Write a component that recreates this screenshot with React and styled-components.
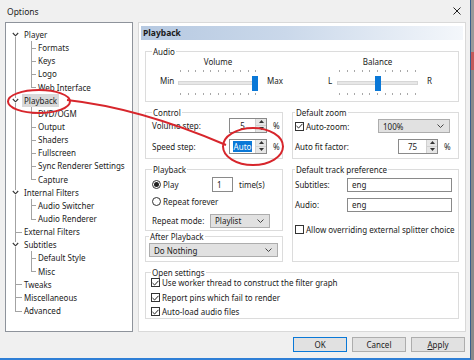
import React from "react";
import styled, { createGlobalStyle } from "styled-components";

const GlobalStyle = createGlobalStyle`
  html, body { margin: 0; padding: 0; background: #7b7b7b; }
  #root { width: 474px; height: 360px; }
  * { box-sizing: border-box; }
`;

const Screen = styled.div`
  position: relative;
  width: 474px;
  height: 360px;
  display: flex;
  overflow: hidden;
  font-family: "Noto Sans", "DejaVu Sans", sans-serif;
  font-size: 8px;
  color: #1b1b1b;
`;

const Dialog = styled.div`
  width: 471px;
  height: 360px;
  background: #f0f0f0;
  border-right: 1px solid #3a5f8c;
  border-bottom: 2px solid #2f7fd6;
  display: flex;
  flex-direction: column;
`;

const Edge = styled.div`
  flex: 1;
  background: linear-gradient(180deg, #9a9a9a 0 52px, #c45a5a 52px 70px, #8a8a8a 70px);
`;

const TitleBar = styled.div`
  height: 22px;
  display: flex;
  align-items: center;
  justify-content: space-between;
  padding: 0 9px 0 7px;
  font-size: 8.5px;
`;

const Body = styled.div`
  height: 310px;
  display: flex;
  gap: 5px;
  padding: 0 4px 0 5px;
`;

const Tree = styled.div`
  width: 128px;
  height: 100%;
  background: #fff;
  border: 1px solid #8e939b;
  padding-top: 5px;
`;

const TreeRow = styled.div`
  height: 13.15px;
  display: flex;
  align-items: stretch;
`;

const Guide = styled.span`
  position: relative;
  flex: none;
  width: ${(p) => p.$w}px;
  display: flex;
  align-items: center;
  padding-left: 6px;

  &::before {
    content: "";
    display: ${(p) => (p.$pos === "none" ? "none" : "block")};
    position: absolute;
    left: 9px;
    width: 1px;
    background: #a3a3a3;
    top: ${(p) => (p.$pos === "first" ? "50%" : "0")};
    bottom: ${(p) => (p.$pos === "last" ? "50%" : "0")};
  }

  &::after {
    content: "";
    display: ${(p) => (p.$stub ? "block" : "none")};
    position: absolute;
    left: 9px;
    top: 50%;
    width: ${(p) => p.$w - 9}px;
    height: 1px;
    background: #a3a3a3;
  }
`;

const Chevron = styled.svg`
  position: relative;
  z-index: 1;
  background: #fff;
`;

const NodeLabel = styled.span`
  display: flex;
  align-items: center;
  padding: 0 2px;
  white-space: nowrap;
  background: ${(p) => (p.$selected ? "#d9d9d9" : "transparent")};
`;

const Panel = styled.div`
  flex: 1;
  height: 100%;
  background: #fff;
  border: 1px solid #d9d9d9;
  padding: 3px 2px 0;
`;

const PanelHeader = styled.div`
  height: 14px;
  line-height: 14px;
  padding-left: 2px;
  font-weight: bold;
  font-size: 8.5px;
  background: linear-gradient(90deg, #b6c9e1 0%, #cad8ea 45%, #f4f7fb 100%);
`;

const Groups = styled.div`
  display: grid;
  grid-template-columns: 138px 167px;
  grid-template-rows: 56px 52px 98px 52px;
  column-gap: 9px;
  row-gap: 5px;
  padding: 5.5px 4px 0;
`;

const Stack = styled.div`
  display: flex;
  flex-direction: column;
  min-height: 0;
`;

const Group = styled.fieldset`
  margin: 0;
  min-width: 0;
  border: 1px solid #dcdcdc;
  padding: 0 ${(p) => p.$pad ?? 6}px;
  grid-column: ${(p) => (p.$wide ? "1 / span 2" : "auto")};
  height: ${(p) => (p.$h ? `${p.$h}px` : "100%")};
  flex: ${(p) => (p.$grow ? 1 : "none")};
  display: flex;
  flex-direction: column;
`;

const Legend = styled.legend`
  padding: 0 1px;
  line-height: 11px;
`;

const AudioRow = styled.div`
  display: flex;
  padding-left: 8px;
`;

const SliderBlock = styled.div`
  display: grid;
  grid-template-columns: ${(p) => p.$lw}px ${(p) => p.$tw}px auto;
  grid-template-rows: 11px auto;
  width: ${(p) => (p.$w ? `${p.$w}px` : "auto")};
  margin-top: -1px;
`;

const SliderTitle = styled.div`
  grid-column: 2;
  grid-row: 1;
  text-align: center;
  line-height: 11px;
`;

const EndLabel = styled.div`
  grid-row: 2;
  grid-column: ${(p) => p.$col};
  display: flex;
  align-items: center;
  padding-left: ${(p) => p.$pl || 0}px;
`;

const TrackWrap = styled.div`
  grid-row: 2;
  grid-column: 2;
  display: flex;
  flex-direction: column;
  padding-top: 3px;
`;

const Ticks = styled.div`
  height: 2px;
  display: flex;
  justify-content: space-between;
  padding: 0 2px;
`;

const Tick = styled.span`
  width: 1px;
  height: 2px;
  background: #a8a8a8;
`;

const Rail = styled.div`
  position: relative;
  height: 15px;
  margin: 4px 0 2px;
  display: flex;
  align-items: center;
`;

const RailLine = styled.div`
  width: 100%;
  height: 4px;
  background: #e7e7e7;
  border: 1px solid #d6d6d6;
`;

const Thumb = styled.div`
  position: absolute;
  top: 0;
  width: 6px;
  height: 15px;
  background: #0a78d7;
  transform: translateX(-50%);
`;

const Row = styled.div`
  display: flex;
  align-items: center;
  height: ${(p) => p.$h || 15}px;
  margin-top: ${(p) => p.$mt || 0}px;
`;

const Label = styled.span`
  width: ${(p) => (p.$w ? `${p.$w}px` : "auto")};
  flex: none;
  white-space: nowrap;
  margin-left: ${(p) => p.$ml || 0}px;
`;

const SpinBox = styled.div`
  display: flex;
  height: 15px;
  border: 1px solid #8a8a8a;
  background: #fff;
`;

const SpinField = styled.div`
  width: ${(p) => p.$w}px;
  display: flex;
  align-items: center;
  justify-content: center;
`;

const Selected = styled.span`
  background: ${(p) => (p.$on ? "#0a78d7" : "transparent")};
  color: ${(p) => (p.$on ? "#fff" : "inherit")};
  padding: 0 1px;
  line-height: 11px;
`;

const SpinButtons = styled.div`
  width: 11px;
  display: flex;
  flex-direction: column;
  background: #e6e6e6;
  border-left: 1px solid #d0d0d0;
`;

const SpinBtn = styled.div`
  flex: 1;
  display: flex;
  align-items: center;
  justify-content: center;
  & + & { border-top: 1px solid #d0d0d0; }
`;

const TextBox = styled.div`
  width: ${(p) => p.$w}px;
  height: ${(p) => p.$h || 14}px;
  border: 1px solid #8a8a8a;
  background: #fff;
  display: flex;
  align-items: center;
  padding-left: 4px;
  margin-left: ${(p) => p.$ml || 0}px;
`;

const SelectBox = styled.div`
  width: ${(p) => p.$w}px;
  height: 14px;
  background: #e1e1e1;
  border: 1px solid #adadad;
  display: flex;
  align-items: center;
  justify-content: space-between;
  padding: 0 5px 0 4px;
  margin-left: ${(p) => p.$ml || 0}px;
`;

const Box = styled.span`
  width: 9px;
  height: 9px;
  flex: none;
  border: 1px solid #333;
  background: #fff;
  border-radius: ${(p) => (p.$round ? "50%" : "0")};
  display: flex;
  align-items: center;
  justify-content: center;
  margin-right: 2px;
`;

const Dot = styled.span`
  width: 5px;
  height: 5px;
  border-radius: 50%;
  background: #222;
`;

const Footer = styled.div`
  flex: 1;
  display: flex;
  justify-content: flex-end;
  gap: 5px;
  padding: 5px 5px 0 0;
`;

const Button = styled.div`
  width: 54px;
  height: 15px;
  background: #e1e1e1;
  border: 1px solid ${(p) => (p.$default ? "#0a78d7" : "#adadad")};
  display: flex;
  align-items: center;
  justify-content: center;
`;

const Overlay = styled.svg`
  position: absolute;
  left: 0;
  top: 0;
  pointer-events: none;
`;

const treeItems = [
  { label: "Player", level: 0, open: true, pos: "first" },
  { label: "Formats", level: 1 },
  { label: "Keys", level: 1 },
  { label: "Logo", level: 1 },
  { label: "Web Interface", level: 1, last: true },
  { label: "Playback", level: 0, open: true, selected: true },
  { label: "DVD/OGM", level: 1 },
  { label: "Output", level: 1 },
  { label: "Shaders", level: 1 },
  { label: "Fullscreen", level: 1 },
  { label: "Sync Renderer Settings", level: 1 },
  { label: "Capture", level: 1, last: true },
  { label: "Internal Filters", level: 0, open: true },
  { label: "Audio Switcher", level: 1 },
  { label: "Audio Renderer", level: 1, last: true },
  { label: "External Filters", level: 0 },
  { label: "Subtitles", level: 0, open: true },
  { label: "Default Style", level: 1 },
  { label: "Misc", level: 1, last: true },
  { label: "Tweaks", level: 0 },
  { label: "Miscellaneous", level: 0 },
  { label: "Advanced", level: 0, pos: "last" },
];

const ChevronDown = ({ w = 7, h = 4, color = "#444" }) => (
  <svg width={w} height={h} viewBox={`0 0 ${w} ${h}`}>
    <polyline points={`0.5,0.5 ${w / 2},${h - 0.5} ${w - 0.5},0.5`} fill="none" stroke={color} strokeWidth="1" />
  </svg>
);

const Triangle = ({ up }) => (
  <svg width="5" height="3" viewBox="0 0 5 3">
    <polygon points={up ? "0,3 2.5,0 5,3" : "0,0 2.5,3 5,0"} fill="#333" />
  </svg>
);

const Check = () => (
  <svg width="7" height="6" viewBox="0 0 7 6">
    <polyline points="0.5,3 2.6,5 6.5,0.8" fill="none" stroke="#222" strokeWidth="1" />
  </svg>
);

const TreeNode = ({ item }) => (
  <TreeRow>
    <Guide $w={16} $pos={item.level === 0 ? item.pos || "mid" : "mid"} $stub={item.level === 0 && !item.open}>
      {item.level === 0 && item.open && (
        <Chevron width="7" height="5" viewBox="0 0 7 5">
          <polyline points="0.8,1 3.5,3.8 6.2,1" fill="none" stroke="#333" strokeWidth="1.1" />
        </Chevron>
      )}
    </Guide>
    {item.level === 1 && <Guide $w={14} $pos={item.last ? "last" : "mid"} $stub />}
    <NodeLabel $selected={item.selected}>{item.label}</NodeLabel>
  </TreeRow>
);

const Slider = ({ title, left, right, value, lw, tw, w }) => (
  <SliderBlock $lw={lw} $tw={tw} $w={w}>
    <SliderTitle>{title}</SliderTitle>
    <EndLabel $col={1}>{left}</EndLabel>
    <TrackWrap>
      <Ticks>{Array.from({ length: 11 }, (_, i) => <Tick key={i} />)}</Ticks>
      <Rail>
        <RailLine />
        <Thumb style={{ left: `${value}%` }} />
      </Rail>
      <Ticks>{Array.from({ length: 11 }, (_, i) => <Tick key={i} />)}</Ticks>
    </TrackWrap>
    <EndLabel $col={3} $pl={9}>{right}</EndLabel>
  </SliderBlock>
);

const Spin = ({ value, w, selected }) => (
  <SpinBox>
    <SpinField $w={w}>
      <Selected $on={selected}>{value}</Selected>
    </SpinField>
    <SpinButtons>
      <SpinBtn><Triangle up /></SpinBtn>
      <SpinBtn><Triangle /></SpinBtn>
    </SpinButtons>
  </SpinBox>
);

const Select = ({ value, w, ml }) => (
  <SelectBox $w={w} $ml={ml}>
    <span>{value}</span>
    <ChevronDown />
  </SelectBox>
);

const CheckItem = ({ children, checked = true }) => (
  <>
    <Box>{checked && <Check />}</Box>
    <Label>{children}</Label>
  </>
);

const RadioItem = ({ children, checked }) => (
  <>
    <Box $round>{checked && <Dot />}</Box>
    <Label>{children}</Label>
  </>
);

export default function App() {
  return (
    <>
      <GlobalStyle />
      <Screen>
        <Dialog>
          <TitleBar>
            <span>Options</span>
            <svg width="8" height="8" viewBox="0 0 8 8">
              <path d="M0.5,0.5 L7.5,7.5 M7.5,0.5 L0.5,7.5" stroke="#222" strokeWidth="1" />
            </svg>
          </TitleBar>
          <Body>
            <Tree>
              {treeItems.map((item) => (
                <TreeNode key={item.label} item={item} />
              ))}
            </Tree>
            <Panel>
              <PanelHeader>Playback</PanelHeader>
              <Groups>
                <Group $wide>
                  <Legend>Audio</Legend>
                  <AudioRow>
                    <Slider title="Volume" left="Min" right="Max" value={96} lw={18} tw={80} w={168} />
                    <Slider title="Balance" left="L" right="R" value={50} lw={9} tw={81} />
                  </AudioRow>
                </Group>

                <Group>
                  <Legend>Control</Legend>
                  <Row $mt={0}>
                    <Label $w={77}>Volume step:</Label>
                    <Spin value="5" w={25} />
                    <Label $ml={6}>%</Label>
                  </Row>
                  <Row $mt={6}>
                    <Label $w={77}>Speed step:</Label>
                    <Spin value="Auto" w={25} selected />
                    <Label $ml={6}>%</Label>
                  </Row>
                </Group>

                <Group $pad={2}>
                  <Legend>Default zoom</Legend>
                  <Row $mt={1}>
                    <Label $w={83}>
                      <Row $h={14}>
                        <CheckItem>Auto-zoom:</CheckItem>
                      </Row>
                    </Label>
                    <Select value="100%" w={72} />
                  </Row>
                  <Row $mt={5}>
                    <Label $w={103}>Auto fit factor:</Label>
                    <Spin value="75" w={27} />
                    <Label $ml={6}>%</Label>
                  </Row>
                </Group>

                <Stack>
                  <Group $h={67.5}>
                    <Legend>Playback</Legend>
                    <Row $mt={2}>
                      <Label $w={60}>
                        <Row $h={15}>
                          <RadioItem checked>Play</RadioItem>
                        </Row>
                      </Label>
                      <TextBox $w={21} $h={15}>1</TextBox>
                      <Label $ml={6}>time(s)</Label>
                    </Row>
                    <Row $h={13} $mt={3}>
                      <RadioItem>Repeat forever</RadioItem>
                    </Row>
                    <Row $h={14} $mt={6}>
                      <Label $w={58}>Repeat mode:</Label>
                      <Select value="Playlist" w={60} />
                    </Row>
                  </Group>
                  <Group $grow $h={30.5} $pad={3}>
                    <Legend>After Playback</Legend>
                    <Row $h={14} $mt={1}>
                      <Select value="Do Nothing" w={129} />
                    </Row>
                  </Group>
                </Stack>

                <Group $pad={2}>
                  <Legend>Default track preference</Legend>
                  <Row $h={14} $mt={3}>
                    <Label $w={52}>Subtitles:</Label>
                    <TextBox $w={105}>eng</TextBox>
                  </Row>
                  <Row $h={14} $mt={6}>
                    <Label $w={52}>Audio:</Label>
                    <TextBox $w={105}>eng</TextBox>
                  </Row>
                  <Row $h={12} $mt={12}>
                    <CheckItem checked={false}>Allow overriding external splitter choice</CheckItem>
                  </Row>
                </Group>

                <Group $wide $pad={5}>
                  <Legend>Open settings</Legend>
                  <Row $h={12} $mt={-0.5}>
                    <CheckItem>Use worker thread to construct the filter graph</CheckItem>
                  </Row>
                  <Row $h={12} $mt={3}>
                    <CheckItem>Report pins which fail to render</CheckItem>
                  </Row>
                  <Row $h={12} $mt={2.5}>
                    <CheckItem>Auto-load audio files</CheckItem>
                  </Row>
                </Group>
              </Groups>
            </Panel>
          </Body>
          <Footer>
            <Button $default>OK</Button>
            <Button>Cancel</Button>
            <Button>
              <span><u>A</u>pply</span>
            </Button>
          </Footer>
        </Dialog>
        <Edge />
        <Overlay width="474" height="360" viewBox="0 0 474 360">
          <g fill="none" stroke="#d7262c" strokeWidth="2">
            <ellipse cx="39" cy="101.5" rx="31" ry="11.5" />
            <path d="M67,100 Q140,108 226,145" />
            <ellipse cx="253" cy="146.5" rx="30" ry="18.5" />
          </g>
        </Overlay>
      </Screen>
    </>
  );
}
